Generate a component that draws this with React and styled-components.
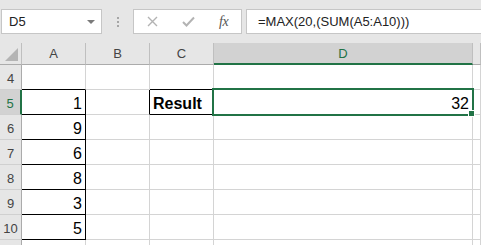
import React from 'react';
import styled, { createGlobalStyle } from 'styled-components';

const GlobalStyle = createGlobalStyle`
    html, body {
        margin: 0;
        padding: 0;
        background: #ffffff;
    }
    body {
        font-family: 'Liberation Sans', Arial, sans-serif;
    }
`;

const GREEN = '#217346';
const GRID = '#d4d4d4';

const Window = styled.div`
    width: 481px;
    height: 245px;
    overflow: hidden;
    background: #ffffff;
`;

const FormulaBar = styled.div`
    display: flex;
    align-items: flex-start;
    height: 43px;
    box-sizing: border-box;
    padding: 9px 0 0 1px;
    background: #e6e6e6;
`;

const NameBox = styled.div`
    display: flex;
    align-items: center;
    justify-content: space-between;
    width: 101px;
    height: 25px;
    box-sizing: border-box;
    padding: 0 6px 0 7px;
    background: #ffffff;
    border: 1px solid #c6c6c6;
    font-size: 13px;
    color: #222;
`;

const Caret = styled.span`
    width: 0;
    height: 0;
    border-left: 4px solid transparent;
    border-right: 4px solid transparent;
    border-top: 4px solid #7a7a7a;
`;

const Grip = styled.div`
    display: flex;
    flex-direction: column;
    align-items: center;
    justify-content: center;
    gap: 2px;
    width: 31px;
    height: 25px;

    span {
        width: 2px;
        height: 2px;
        background: #a6a6a6;
    }
`;

const FxTools = styled.div`
    display: flex;
    align-items: center;
    width: 109px;
    height: 25px;
    box-sizing: border-box;
    padding-left: 13px;
    gap: 24px;
    background: #ffffff;
    border: 1px solid #c6c6c6;
`;

const FxLabel = styled.span`
    font-family: 'Liberation Serif', 'Times New Roman', serif;
    font-style: italic;
    font-size: 14px;
    color: #555;
    letter-spacing: -0.5px;
`;

const FormulaInput = styled.div`
    flex: 1;
    display: flex;
    align-items: center;
    height: 25px;
    margin-left: 4px;
    box-sizing: border-box;
    padding-left: 11px;
    background: #ffffff;
    border: 1px solid #c6c6c6;
    border-right: none;
    font-size: 13px;
    color: #222;
    white-space: nowrap;
`;

const Sheet = styled.div`
    display: grid;
    grid-template-columns: 22px 64px 64px 64px 259px 1fr;
    grid-template-rows: 22px repeat(7, 25px) 25px;
`;

const Corner = styled.div`
    position: relative;
    background: #e6e6e6;
    border-right: 1px solid #bfbfbf;
    border-bottom: 1px solid #ababab;
    box-sizing: border-box;

    &::after {
        content: '';
        position: absolute;
        right: 3px;
        bottom: 3px;
        width: 0;
        height: 0;
        border-left: 13px solid transparent;
        border-bottom: 13px solid #b4b4b4;
    }
`;

const ColHead = styled.div`
    display: flex;
    align-items: center;
    justify-content: center;
    box-sizing: border-box;
    background: ${(p) => (p.$active ? '#d2d2d2' : '#e6e6e6')};
    border-right: 1px solid #bfbfbf;
    border-bottom: ${(p) => (p.$active ? `2px solid ${GREEN}` : '1px solid #ababab')};
    font-size: 13px;
    color: ${(p) => (p.$active ? GREEN : '#444')};
`;

const RowHead = styled.div`
    display: flex;
    align-items: center;
    justify-content: center;
    box-sizing: border-box;
    padding-top: 2px;
    background: ${(p) => (p.$active ? '#d2d2d2' : '#e6e6e6')};
    border-right: ${(p) => (p.$active ? `2px solid ${GREEN}` : '1px solid #ababab')};
    border-bottom: 1px solid #d0d0d0;
    font-size: 13px;
    color: ${(p) => (p.$active ? GREEN : '#444')};
`;

const Cell = styled.div`
    position: relative;
    display: flex;
    align-items: flex-end;
    justify-content: ${(p) => (p.$left ? 'flex-start' : 'flex-end')};
    box-sizing: border-box;
    padding: 0 3px 1px 3px;
    border-right: 1px solid ${(p) => (p.$blackRight ? '#000' : GRID)};
    border-bottom: 1px solid ${(p) => (p.$blackBottom ? '#000' : GRID)};
    font-size: 16px;
    line-height: 18px;
    font-weight: ${(p) => (p.$bold ? 700 : 400)};
    color: #000;
`;

const Selection = styled.div`
    position: absolute;
    inset: -2px;
    border: 2px solid ${GREEN};
    z-index: 2;
    pointer-events: none;
`;

const FillHandle = styled.span`
    position: absolute;
    right: -3px;
    bottom: -3px;
    width: 5px;
    height: 5px;
    background: ${GREEN};
    border: 1px solid #ffffff;
`;

function CrossIcon() {
    return (
        <svg width="11" height="11" viewBox="0 0 11 11">
            <path d="M1 1 L10 10 M10 1 L1 10" stroke="#b3b3b3" strokeWidth="1.4" fill="none" />
        </svg>
    );
}

function CheckIcon() {
    return (
        <svg width="13" height="11" viewBox="0 0 13 11">
            <path d="M1 6 L4.5 9.5 L12 1.5" stroke="#b3b3b3" strokeWidth="2" fill="none" />
        </svg>
    );
}

// row 11 is only a sliver at the bottom edge, its number falls outside the view
const rows = [
    { n: 4, label: '4', a: '' },
    { n: 5, label: '5', a: '1' },
    { n: 6, label: '6', a: '9' },
    { n: 7, label: '7', a: '6' },
    { n: 8, label: '8', a: '8' },
    { n: 9, label: '9', a: '3' },
    { n: 10, label: '10', a: '5' },
    { n: 11, label: '', a: '' },
];

function App() {
    return (
        <Window>
            <GlobalStyle />
            <FormulaBar>
                <NameBox>
                    D5
                    <Caret />
                </NameBox>
                <Grip>
                    <span />
                    <span />
                    <span />
                </Grip>
                <FxTools>
                    <CrossIcon />
                    <CheckIcon />
                    <FxLabel>fx</FxLabel>
                </FxTools>
                <FormulaInput>=MAX(20,(SUM(A5:A10)))</FormulaInput>
            </FormulaBar>
            <Sheet>
                <Corner />
                <ColHead>A</ColHead>
                <ColHead>B</ColHead>
                <ColHead>C</ColHead>
                <ColHead $active>D</ColHead>
                <ColHead />
                {rows.map((r) => {
                    const boxedA = r.n >= 5 && r.n <= 10;
                    return (
                        <React.Fragment key={r.n}>
                            <RowHead $active={r.n === 5}>{r.label}</RowHead>
                            <Cell $blackRight={boxedA} $blackBottom={r.n >= 4 && r.n <= 10}>
                                {r.a}
                            </Cell>
                            <Cell $blackRight={r.n === 5} />
                            <Cell $left $bold $blackRight={r.n === 5} $blackBottom={r.n === 4 || r.n === 5}>
                                {r.n === 5 ? 'Result' : ''}
                            </Cell>
                            <Cell>
                                {r.n === 5 && (
                                    <>
                                        32
                                        <Selection>
                                            <FillHandle />
                                        </Selection>
                                    </>
                                )}
                            </Cell>
                            <Cell />
                        </React.Fragment>
                    );
                })}
            </Sheet>
        </Window>
    );
}

export default App;
